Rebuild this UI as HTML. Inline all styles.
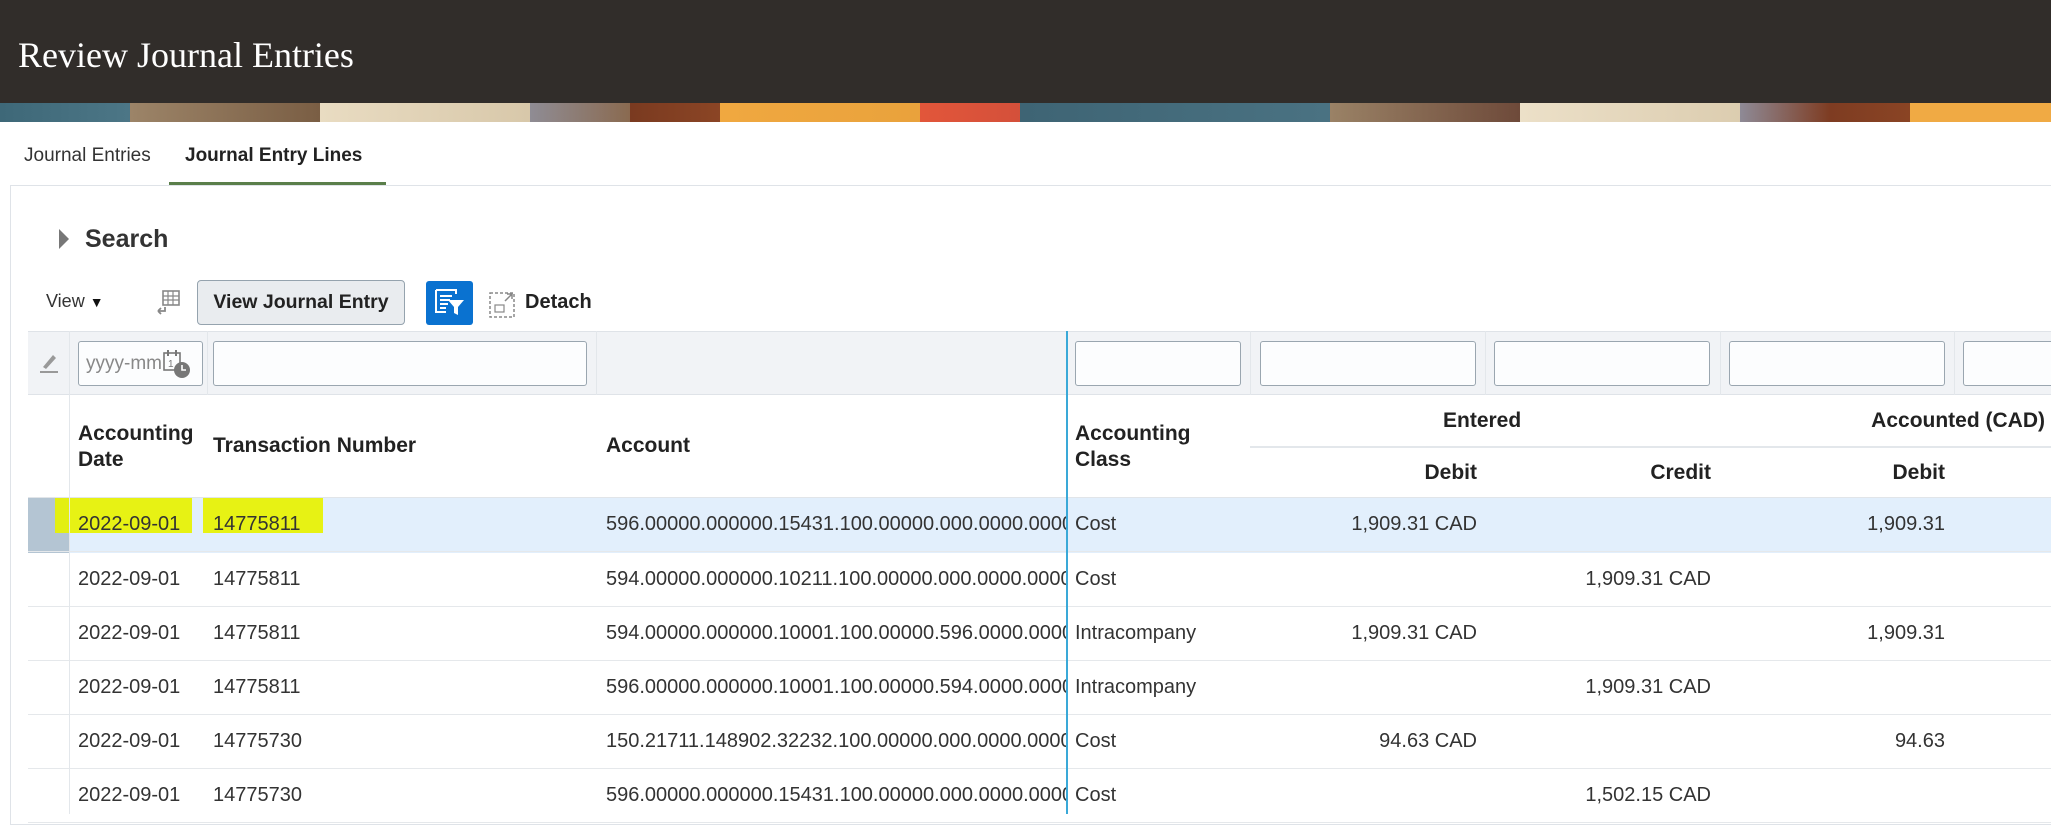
<!DOCTYPE html>
<html><head><meta charset="utf-8"><style>
*{box-sizing:border-box;margin:0;padding:0}
body{width:2051px;height:814px;overflow:hidden;background:#fff;font-family:"Liberation Sans",Arial,sans-serif;color:#333;position:relative}
.a{position:absolute;white-space:nowrap}
.hdr{left:0;top:0;width:2051px;height:103px;background:#312d2a}
.ban{left:0;top:103px;width:2051px;height:19px;background:linear-gradient(90deg,#3e6878 0,#4c7686 130px,#9c8468 130px,#7a5e44 320px,#e9dcc2 320px,#d8c8aa 530px,#8f8c94 530px,#8a6a50 630px,#7a3a20 630px,#8b4525 720px,#f0a840 720px,#e9a23c 920px,#e2563a 920px,#d4503a 1020px,#3e6474 1020px,#4a7282 1330px,#9a8266 1330px,#6e4a3a 1520px,#ece0c8 1520px,#dccdb0 1740px,#8e8a96 1740px,#7e3c22 1830px,#8a4424 1910px,#f0aa44 1910px)}
.title{left:18px;top:34px;font-family:"Liberation Serif",serif;font-size:36px;color:#fff}
.tab{top:145px;font-size:19px;color:#333}
.box{left:10px;top:185px;width:2060px;height:640px;border:1px solid #dfe3e8}
.inp{position:absolute;height:45px;border:1px solid #9aa6b0;border-radius:3px;background:#fcfdfe}
.fr{left:28px;top:331px;width:2023px;height:64px;background:#f1f3f6;border-top:1px solid #dfe3e8;border-bottom:1px solid #dfe3e8}
.vl{position:absolute;width:1px;background:#e3e7eb}
.h{font-weight:bold;font-size:21px;color:#222}
.row{position:absolute;left:28px;width:2023px;height:54px;border-bottom:1px solid #e5e8eb}
.d{position:absolute;font-size:20px;color:#333;top:15px;white-space:nowrap}
.r{text-align:right}
.acc{left:578px;width:460px;overflow:hidden}
</style></head><body>
<div class="a hdr"></div>
<div class="a ban"></div>
<div class="a title">Review Journal Entries</div>
<div class="a tab" style="left:24px">Journal Entries</div>
<div class="a tab" style="left:185px;font-weight:bold;color:#222">Journal Entry Lines</div>
<div class="a" style="left:169px;top:182px;width:217px;height:4px;background:#5a7e4a"></div>
<div class="a box"></div>
<div class="a" style="left:59px;top:229px;width:0;height:0;border-top:10px solid transparent;border-bottom:10px solid transparent;border-left:10px solid #777"></div>
<div class="a" style="left:85px;top:225px;font-size:25px;font-weight:bold;color:#333">Search</div>
<div class="a" style="left:46px;top:291px;font-size:18px">View <span style="font-size:14px;color:#111">▼</span></div>
<svg class="a" style="left:155px;top:289px" width="26" height="28" viewBox="0 0 26 28"><rect x="8" y="2" width="16" height="14" fill="none" stroke="#888" stroke-width="1.6"/><path d="M8 7h16M8 11h16M13 2v14M18 2v14" stroke="#888" stroke-width="1.2"/><path d="M10 18v4H3M3 22l3-3M3 22l3 3" fill="none" stroke="#888" stroke-width="1.8"/></svg>
<div class="a" style="left:197px;top:280px;width:208px;height:45px;border:1px solid #95a3ae;border-radius:4px;background:#e9ecef;font-size:19.5px;font-weight:bold;color:#222;text-align:center;line-height:43px">View Journal Entry</div>
<div class="a" style="left:426px;top:281px;width:47px;height:44px;background:#0a72d0;border-radius:3px"></div>
<svg class="a" style="left:434px;top:288px" width="32" height="30" viewBox="0 0 32 30"><path d="M2 2h20v4M2 2v22h10M6 8h12M6 12h10M6 16h8M6 20h6" stroke="#fff" stroke-width="2" fill="none"/><path d="M14 12h16l-6 7v8l-4-2v-6z" fill="#fff"/></svg>
<svg class="a" style="left:489px;top:290px" width="28" height="28" viewBox="0 0 28 28"><rect x="1" y="3" width="24" height="24" fill="none" stroke="#888" stroke-width="1.5" stroke-dasharray="3 2"/><rect x="6" y="15" width="9" height="7" fill="none" stroke="#888" stroke-width="1.2"/><path d="M16 11l7-7M18 4h5v5" stroke="#888" stroke-width="1.5" fill="none"/></svg>
<div class="a" style="left:525px;top:291px;font-size:20px;font-weight:bold;color:#222">Detach</div>

<div class="a fr"></div>
<svg class="a" style="left:38px;top:352px" width="22" height="22" viewBox="0 0 22 22"><path d="M5 15l10-12 3 3-10 11z" fill="#999"/><path d="M2 20h18" stroke="#999" stroke-width="2"/></svg>
<div class="inp" style="left:78px;top:341px;width:125px"></div>
<div class="a" style="left:86px;top:353px;font-size:19px;color:#888;width:75px;overflow:hidden">yyyy-mm</div>
<svg class="a" style="left:162px;top:348px" width="32" height="32" viewBox="0 0 32 32"><rect x="2" y="5" width="16" height="17" fill="#fcfdfe" stroke="#777" stroke-width="1.6"/><path d="M6 2v6M14 2v6" stroke="#777" stroke-width="2"/><text x="6" y="19" font-size="10" fill="#777" font-family="Liberation Sans">1</text><circle cx="20" cy="22" r="8" fill="#777"/><path d="M20 17v5h4" stroke="#fff" stroke-width="1.6" fill="none"/></svg>
<div class="inp" style="left:213px;top:341px;width:374px"></div>
<div class="inp" style="left:1075px;top:341px;width:166px"></div>
<div class="inp" style="left:1260px;top:341px;width:216px"></div>
<div class="inp" style="left:1494px;top:341px;width:216px"></div>
<div class="inp" style="left:1729px;top:341px;width:216px"></div>
<div class="inp" style="left:1963px;top:341px;width:100px"></div>
<div class="vl" style="left:69px;top:331px;height:483px"></div>
<div class="vl" style="left:207px;top:331px;height:64px"></div>
<div class="vl" style="left:596px;top:331px;height:64px"></div>
<div class="vl" style="left:1250px;top:331px;height:64px"></div>
<div class="vl" style="left:1485px;top:331px;height:64px"></div>
<div class="vl" style="left:1720px;top:331px;height:64px"></div>
<div class="vl" style="left:1954px;top:331px;height:64px"></div>

<div class="a h" style="left:78px;top:421px;line-height:26px">Accounting<br>Date</div>
<div class="a h" style="left:213px;top:434px">Transaction Number</div>
<div class="a h" style="left:606px;top:434px">Account</div>
<div class="a h" style="left:1075px;top:421px;line-height:26px">Accounting<br>Class</div>
<div class="a h" style="left:1443px;top:409px">Entered</div>
<div class="a h" style="left:1845px;top:409px;width:200px;text-align:right">Accounted (CAD)</div>
<div class="a" style="left:1250px;top:446px;width:801px;height:2px;background:#e3e7eb"></div>
<div class="a h r" style="left:1300px;top:461px;width:177px">Debit</div>
<div class="a h r" style="left:1530px;top:461px;width:181px">Credit</div>
<div class="a h r" style="left:1770px;top:461px;width:175px">Debit</div>
<div class="a" style="left:28px;top:497px;width:2023px;height:1px;background:#e1e5e9"></div>

<div class="a" style="left:28px;top:498px;width:2023px;height:55px;background:#e2effc"></div>
<div class="a" style="left:28px;top:498px;width:41px;height:55px;background:#b4c5d3"></div>
<div class="a" style="left:55px;top:498px;width:137px;height:35px;background:#e7f200;opacity:.92"></div>
<div class="a" style="left:203px;top:498px;width:120px;height:35px;background:#e7f200;opacity:.92"></div>

<div class="row" style="top:498px;background:transparent"><span class="d" style="left:50px">2022-09-01</span><span class="d" style="left:185px">14775811</span><span class="d acc">596.00000.000000.15431.100.00000.000.0000.0000</span><span class="d" style="left:1047px">Cost</span><span class="d r" style="left:1250px;width:199px">1,909.31 CAD</span><span class="d r" style="left:1720px;width:197px">1,909.31</span></div>
<div class="row" style="top:553px"><span class="d" style="left:50px">2022-09-01</span><span class="d" style="left:185px">14775811</span><span class="d acc">594.00000.000000.10211.100.00000.000.0000.0000</span><span class="d" style="left:1047px">Cost</span><span class="d r" style="left:1480px;width:203px">1,909.31 CAD</span></div>
<div class="row" style="top:607px"><span class="d" style="left:50px">2022-09-01</span><span class="d" style="left:185px">14775811</span><span class="d acc">594.00000.000000.10001.100.00000.596.0000.0000</span><span class="d" style="left:1047px">Intracompany</span><span class="d r" style="left:1250px;width:199px">1,909.31 CAD</span><span class="d r" style="left:1720px;width:197px">1,909.31</span></div>
<div class="row" style="top:661px"><span class="d" style="left:50px">2022-09-01</span><span class="d" style="left:185px">14775811</span><span class="d acc">596.00000.000000.10001.100.00000.594.0000.0000</span><span class="d" style="left:1047px">Intracompany</span><span class="d r" style="left:1480px;width:203px">1,909.31 CAD</span></div>
<div class="row" style="top:715px"><span class="d" style="left:50px">2022-09-01</span><span class="d" style="left:185px">14775730</span><span class="d acc">150.21711.148902.32232.100.00000.000.0000.0000</span><span class="d" style="left:1047px">Cost</span><span class="d r" style="left:1250px;width:199px">94.63 CAD</span><span class="d r" style="left:1720px;width:197px">94.63</span></div>
<div class="row" style="top:769px"><span class="d" style="left:50px">2022-09-01</span><span class="d" style="left:185px">14775730</span><span class="d acc">596.00000.000000.15431.100.00000.000.0000.0000</span><span class="d" style="left:1047px">Cost</span><span class="d r" style="left:1480px;width:203px">1,502.15 CAD</span></div>
<div class="vl" style="left:69px;top:395px;height:419px"></div>
<div class="a" style="left:1066px;top:331px;width:2px;height:483px;background:#3aa9d8"></div>
</body></html>
